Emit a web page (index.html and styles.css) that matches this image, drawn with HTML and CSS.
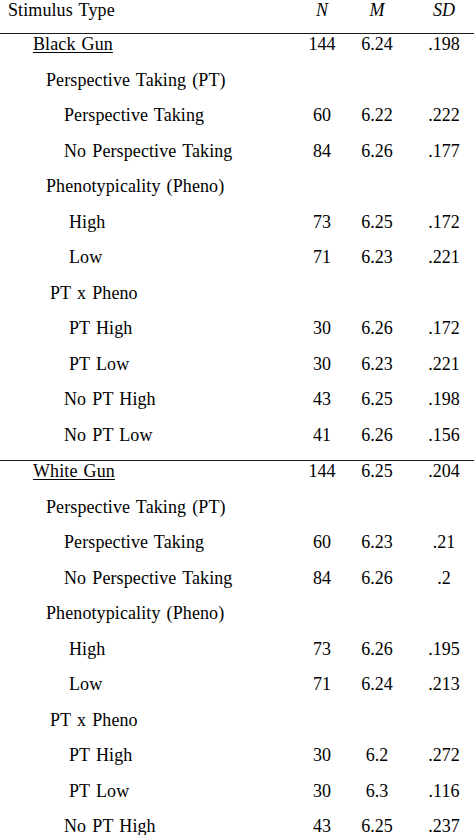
FILE: index.html
```html
<!DOCTYPE html>
<html>
<head>
<meta charset="utf-8">
<link rel="stylesheet" href="styles.css">
</head>
<body>
<div class="table">
  <div class="row head">
    <div class="lab">Stimulus Type</div>
    <div class="num it">N</div>
    <div class="num it">M</div>
    <div class="num it sd">SD</div>
  </div>
  <div class="group">
    <div class="row"><div class="lab l1 u">Black Gun</div><div class="num">144</div><div class="num">6.24</div><div class="num sd">.198</div></div>
    <div class="row"><div class="lab l2">Perspective Taking (PT)</div><div class="num"></div><div class="num"></div><div class="num sd"></div></div>
    <div class="row"><div class="lab l3">Perspective Taking</div><div class="num">60</div><div class="num">6.22</div><div class="num sd">.222</div></div>
    <div class="row"><div class="lab l3">No Perspective Taking</div><div class="num">84</div><div class="num">6.26</div><div class="num sd">.177</div></div>
    <div class="row"><div class="lab l2">Phenotypicality (Pheno)</div><div class="num"></div><div class="num"></div><div class="num sd"></div></div>
    <div class="row"><div class="lab l4">High</div><div class="num">73</div><div class="num">6.25</div><div class="num sd">.172</div></div>
    <div class="row"><div class="lab l4">Low</div><div class="num">71</div><div class="num">6.23</div><div class="num sd">.221</div></div>
    <div class="row"><div class="lab l2b">PT x Pheno</div><div class="num"></div><div class="num"></div><div class="num sd"></div></div>
    <div class="row"><div class="lab l4">PT High</div><div class="num">30</div><div class="num">6.26</div><div class="num sd">.172</div></div>
    <div class="row"><div class="lab l4">PT Low</div><div class="num">30</div><div class="num">6.23</div><div class="num sd">.221</div></div>
    <div class="row"><div class="lab l3">No PT High</div><div class="num">43</div><div class="num">6.25</div><div class="num sd">.198</div></div>
    <div class="row"><div class="lab l3">No PT Low</div><div class="num">41</div><div class="num">6.26</div><div class="num sd">.156</div></div>
  </div>
  <div class="group second">
    <div class="row"><div class="lab l1 u">White Gun</div><div class="num">144</div><div class="num">6.25</div><div class="num sd">.204</div></div>
    <div class="row"><div class="lab l2">Perspective Taking (PT)</div><div class="num"></div><div class="num"></div><div class="num sd"></div></div>
    <div class="row"><div class="lab l3">Perspective Taking</div><div class="num">60</div><div class="num">6.23</div><div class="num sd">.21</div></div>
    <div class="row"><div class="lab l3">No Perspective Taking</div><div class="num">84</div><div class="num">6.26</div><div class="num sd">.2</div></div>
    <div class="row"><div class="lab l2">Phenotypicality (Pheno)</div><div class="num"></div><div class="num"></div><div class="num sd"></div></div>
    <div class="row"><div class="lab l4">High</div><div class="num">73</div><div class="num">6.26</div><div class="num sd">.195</div></div>
    <div class="row"><div class="lab l4">Low</div><div class="num">71</div><div class="num">6.24</div><div class="num sd">.213</div></div>
    <div class="row"><div class="lab l2b">PT x Pheno</div><div class="num"></div><div class="num"></div><div class="num sd"></div></div>
    <div class="row"><div class="lab l4">PT High</div><div class="num">30</div><div class="num">6.2</div><div class="num sd">.272</div></div>
    <div class="row"><div class="lab l4">PT Low</div><div class="num">30</div><div class="num">6.3</div><div class="num sd">.116</div></div>
    <div class="row"><div class="lab l3">No PT High</div><div class="num">43</div><div class="num">6.25</div><div class="num sd">.237</div></div>
  </div>
</div>
</body>
</html>
```
FILE: styles.css
```css
html, body {
  margin: 0;
  padding: 0;
  background: #ffffff;
}
body {
  font-family: "Liberation Serif", "Times New Roman", serif;
  font-size: 18px;
  color: #000000;
  width: 474px;
  height: 835px;
  overflow: hidden;
}
.table {
  display: flex;
  flex-direction: column;
}
.row {
  display: grid;
  grid-template-columns: 302px 40px 70px 62px;
  height: 35.5px;
  line-height: 20px;
  padding-top: 0.5px;
  box-sizing: border-box;
}
.row.head {
  height: 33.5px;
  line-height: 20px;
  padding-top: 0;
  border-bottom: 1.5px solid #1a1a1a;
}
.head .lab {
  padding-left: 8px;
}
.num {
  text-align: center;
  white-space: nowrap;
}
.sd {
  padding-left: 2px;
}
.it {
  font-style: italic;
}
.lab {
  white-space: nowrap;
  word-spacing: 1.5px;
  letter-spacing: 0.1px;
}
.u {
  text-decoration: underline;
  text-decoration-thickness: 1px;
  text-underline-offset: 2px;
}
.l1 { padding-left: 33px; }
.l2 { padding-left: 46px; }
.l2b { padding-left: 50px; }
.l3 { padding-left: 64px; }
.l4 { padding-left: 69px; }
.group.second {
  border-top: 1.5px solid #1a1a1a;
}
```
